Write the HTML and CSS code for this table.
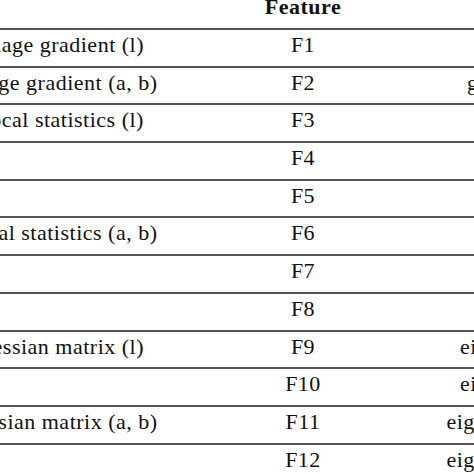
FILE: index.html
```html
<!DOCTYPE html>
<html>
<head>
<meta charset="utf-8">
<link rel="stylesheet" href="styles.css">
</head>
<body>
<div class="viewport">
<table class="feat-table">
  <colgroup>
    <col class="col-desc">
    <col class="col-feat">
    <col class="col-def">
  </colgroup>
  <thead>
    <tr><th></th><th>Feature</th><th>Definition</th></tr>
  </thead>
  <tbody>
    <tr><td>Image gradient (l)</td><td>F1</td><td>magnitude</td></tr>
    <tr><td>Image gradient (a, b)</td><td>F2</td><td>gradient angle</td></tr>
    <tr><td>Local statistics (l)</td><td>F3</td><td>mean</td></tr>
    <tr><td></td><td>F4</td><td>variance</td></tr>
    <tr><td></td><td>F5</td><td>entropy</td></tr>
    <tr><td>Local statistics (a, b)</td><td>F6</td><td>mean</td></tr>
    <tr><td></td><td>F7</td><td>variance</td></tr>
    <tr><td></td><td>F8</td><td>entropy</td></tr>
    <tr><td>Hessian matrix (l)</td><td>F9</td><td>eigenvalue 1 (l)</td></tr>
    <tr><td></td><td>F10</td><td>eigenvalue 2 (l)</td></tr>
    <tr><td>Hessian matrix (a, b)</td><td>F11</td><td>eigenvalue 1 (a, b)</td></tr>
    <tr><td></td><td>F12</td><td>eigenvalue 2 (a, b)</td></tr>
  </tbody>
</table>
</div>
</body>
</html>
```
FILE: styles.css
```css
html, body {
  margin: 0;
  padding: 0;
  background: #ffffff;
}
.viewport {
  width: 474px;
  height: 474px;
  overflow: hidden;
}
.feat-table {
  table-layout: fixed;
  border-collapse: separate;
  border-spacing: 0;
  width: 720px;
  margin-top: -9.7px;
  margin-left: -69.9px;
  font-family: "Liberation Serif", "Times New Roman", serif;
  font-size: 22px;
  letter-spacing: 0.5px;
  color: #111111;
}
.col-desc { width: 260px; }
.col-feat { width: 225.8px; }
.col-def { width: 234.2px; }
.feat-table th,
.feat-table td {
  border-top: 2px solid #555555;
  padding: 0 0 5.7px 0;
  line-height: 30px;
  text-align: center;
  white-space: nowrap;
  vertical-align: top;
}
.feat-table th {
  font-weight: bold;
}
```
